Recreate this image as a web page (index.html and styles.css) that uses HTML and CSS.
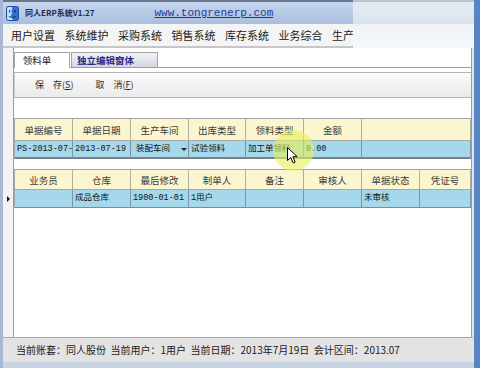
FILE: index.html
```html
<!DOCTYPE html>
<html lang="zh-CN">
<head>
<meta charset="utf-8">
<title>同人ERP系统V1.27</title>
<link rel="stylesheet" href="styles.css">
</head>
<body>
<div class="window">
  <div class="titlebar">
    <div class="title-left">
      <svg class="app-icon" width="13" height="15" viewBox="0 0 13 15">
        <rect x="0.5" y="0.5" width="12" height="14" rx="2" fill="#2f6fd0" stroke="#1d4e9c"/>
        <path d="M1 2.5 Q1 1 2.5 1 L6.5 1 Q5 5 6 8 L5 8 Q5 11 7 14 L2.5 14 Q1 14 1 12.5 Z" fill="#bfe0fa"/>
        <rect x="3.2" y="4" width="1" height="2.5" fill="#10223f"/>
        <rect x="8.6" y="4" width="1" height="2.5" fill="#10223f"/>
        <path d="M3 10.5 Q6.5 12.5 10 10.5" fill="none" stroke="#10223f" stroke-width="0.9"/>
      </svg>
      <span class="app-title">同人ERP系统V1.27</span>
      <span class="url">www.tongrenerp.com</span>
    </div>
    <div class="title-right"></div>
  </div>
  <div class="menubar">
    <div class="menu-left">
      <span class="menu-item">用户设置</span>
      <span class="menu-item">系统维护</span>
      <span class="menu-item">采购系统</span>
      <span class="menu-item">销售系统</span>
      <span class="menu-item">库存系统</span>
      <span class="menu-item">业务综合</span>
      <span class="menu-item">生产</span>
    </div>
    <div class="menu-right"></div>
  </div>
  <div class="frame">
    <div class="gutter"></div>
    <div class="main">
      <div class="tabs">
        <div class="tab active">领料单</div>
        <div class="tab alt">独立编辑窗体</div>
      </div>
      <div class="panel">
        <div class="toolbar">
          <span class="tool">保　存(<u>S</u>)</span>
          <span class="tool">取　消(<u>F</u>)</span>
        </div>
        <div class="grid g1">
          <div class="hd">单据编号</div>
          <div class="hd">单据日期</div>
          <div class="hd">生产车间</div>
          <div class="hd">出库类型</div>
          <div class="hd">领料类型</div>
          <div class="hd">金额</div>
          <div class="hd"></div>
          <div class="cell">PS-2013-07-</div>
          <div class="cell">2013-07-19</div>
          <div class="cell combo"><span class="combo-text">装配车间</span><span class="arrow"></span></div>
          <div class="cell">试验领料</div>
          <div class="cell hl">加工单领料<span class="spot"></span><svg class="cursor" width="12" height="17" viewBox="0 0 12 17"><path d="M0.5 0.5 L0.5 13.5 L3.8 10.5 L6.2 16 L8.2 15.1 L5.9 9.7 L10.2 9.7 Z" fill="#fff" stroke="#000" stroke-width="1"/></svg></div>
          <div class="cell">0.00</div>
          <div class="cell"></div>
        </div>
        <div class="grid g2">
          <div class="hd">业务员</div>
          <div class="hd">仓库</div>
          <div class="hd">最后修改</div>
          <div class="hd">制单人</div>
          <div class="hd">备注</div>
          <div class="hd">审核人</div>
          <div class="hd">单据状态</div>
          <div class="hd">凭证号</div>
          <div class="cell first"></div>
          <div class="cell">成品仓库</div>
          <div class="cell">1900-01-01</div>
          <div class="cell">1用户</div>
          <div class="cell"></div>
          <div class="cell"></div>
          <div class="cell">未审核</div>
          <div class="cell"></div>
        </div>
      </div>
    </div>
  </div>
  <div class="statusbar">当前账套：同人股份&nbsp;&nbsp;当前用户：1用户&nbsp;&nbsp;当前日期：2013年7月19日&nbsp;&nbsp;会计区间：2013.07</div>
  <div class="bottom"></div>
</div>
</body>
</html>
```

FILE: styles.css
```css
* { box-sizing: border-box; }
html, body { margin: 0; padding: 0; }
body {
  width: 480px;
  height: 368px;
  overflow: hidden;
  font-family: "Noto Sans CJK SC", "Liberation Sans", sans-serif;
  color: #1a1a1a;
  background: #dfe7ef;
}
.window {
  width: 480px;
  height: 368px;
  display: flex;
  flex-direction: column;
  border-left: 3px solid #a7b7d5;
  border-right: 6px solid #5784c3;
}

/* title bar */
.titlebar {
  height: 24px;
  display: flex;
  flex: none;
}
.title-left {
  width: 350px;
  display: flex;
  align-items: center;
  border-top: 2px solid #6b7894;
  background: linear-gradient(#c6d6ec, #a9bfdf);
  padding-left: 3px;
}
.title-right {
  flex: 1;
  border-top: 2px solid #b9c5d3;
  background: linear-gradient(#e4eaf1, #dbe4ed);
}
.app-icon { flex: none; }
.app-title {
  margin-left: 6px;
  font-size: 8px;
  line-height: 10px;
  color: #1b2b55;
  font-weight: bold;
}
.url {
  margin-left: 60px;
  font-family: "Liberation Mono", monospace;
  font-size: 11px;
  line-height: 12px;
  color: #1f3a9c;
  text-decoration: underline;
}

/* menu */
.menubar {
  height: 24px;
  display: flex;
  flex: none;
}
.menu-left {
  width: 350px;
  overflow: hidden;
  white-space: nowrap;
  display: flex;
  align-items: center;
  gap: 9.5px;
  padding-left: 8px;
  background: #f4f4f4;
  border-bottom: 2px solid #c6c6c6;
}
.menu-item {
  flex: none;
  font-size: 11px;
  line-height: 14px;
  color: #222;
}
.menu-right {
  flex: 1;
  background: linear-gradient(#eef2f6, #f6f8fa);
}

/* frame */
.frame {
  flex: 1;
  display: flex;
  min-height: 0;
}
.gutter {
  width: 10px;
  flex: none;
  background: #f2f3f5;
}
.main {
  flex: 1;
  background: #fff;
  border-left: 1px solid #9c9c9c;
  border-right: 1px solid #9c9c9c;
  margin-right: 2px;
  padding-top: 4px;
  display: flex;
  flex-direction: column;
}
.tabs {
  display: flex;
  height: 15px;
  flex: none;
}
.tab {
  height: 15px;
  font-size: 9.5px;
  line-height: 14px;
  border: 1px solid #a5a5a5;
  border-bottom: none;
  text-align: center;
}
.tab.active {
  width: 56px;
  background: #fff;
  color: #222;
  padding-right: 10px;
  position: relative;
  z-index: 1;
  height: 16px;
}
.tab.alt {
  width: 87px;
  background: linear-gradient(#f2f2f6, #d5d7df);
  color: #2a2a8c;
  font-weight: bold;
  margin-left: 1px;
  text-align: left;
  padding-left: 5px;
}
.panel {
  border-top: 1px solid #9c9c9c;
  padding-top: 4px;
  flex: 1;
}
.toolbar {
  height: 26px;
  border-top: 1px solid #b3b3b3;
  border-bottom: 1px solid #b3b3b3;
  border-left: 1px solid #d0d0d0;
  background: linear-gradient(#fafafa, #ebebeb);
  display: flex;
  align-items: center;
  gap: 22px;
  padding-left: 20px;
}
.tool {
  font-size: 9px;
  line-height: 12px;
  color: #2a2a2a;
  white-space: pre;
}

/* grids */
.grid {
  display: grid;
  border-top: 1px solid #a4a4a4;
  border-left: 1px solid #a4a4a4;
  font-size: 8.5px;
}
.g1 {
  margin-top: 20px;
  grid-template-columns: 58px 58px 58px 57px 58px 58px 1fr;
  grid-template-rows: 22px 18px;
}
.g2 {
  margin-top: 10px;
  grid-template-columns: 58px 58px 58px 57px 58px 58px 58px 1fr;
  grid-template-rows: 20px 18px;
}
.hd {
  background: #fbf5d0;
  border-right: 1px solid #b0ae9c;
  border-bottom: 1px solid #a7a7a7;
  text-align: center;
  font-size: 9.5px;
  color: #3a3a3a;
  display: flex;
  align-items: center;
  justify-content: center;
}
.cell {
  background: #a6d8ec;
  border-right: 1px solid #7d93a6;
  border-bottom: 1px solid #7f8c98;
  font-family: "Liberation Mono", "Noto Sans CJK SC", monospace;
  font-size: 8.5px;
  line-height: 17px;
  padding-left: 2px;
  white-space: nowrap;
  overflow: hidden;
  color: #111;
}
.g1 .cell {
  border-bottom: 2px solid #7a8088;
}
.g1 .cell.hl { overflow: visible; position: relative; }
.combo {
  display: flex;
  align-items: center;
  padding-left: 5px;
}
.combo-text {
  width: 35px;
  overflow: hidden;
  flex: none;
}
.arrow {
  margin-left: 10px;
  width: 0;
  height: 0;
  border-left: 3px solid transparent;
  border-right: 3px solid transparent;
  border-top: 3px solid #222;
}
.spot {
  position: absolute;
  left: 27px;
  top: -11px;
  width: 41px;
  height: 41px;
  border-radius: 50%;
  background: rgba(232, 240, 90, 0.6);
}
.cursor {
  position: absolute;
  left: 41px;
  top: 6px;
}
.g2 .cell.first { position: relative; overflow: visible; }
.g2 .cell.first::before {
  content: "";
  position: absolute;
  left: -8px;
  top: 6px;
  border-top: 3px solid transparent;
  border-bottom: 3px solid transparent;
  border-left: 3px solid #111;
}

/* status bar */
.statusbar {
  height: 25px;
  flex: none;
  border-top: 1px solid #a6a6a6;
  background: #e3e3e3;
  font-size: 10px;
  line-height: 24px;
  padding-left: 13px;
  color: #1a1a1a;
  white-space: nowrap;
  margin-right: 1px;
}
.bottom {
  height: 6px;
  flex: none;
  background: #c7d3e3;
}
```
